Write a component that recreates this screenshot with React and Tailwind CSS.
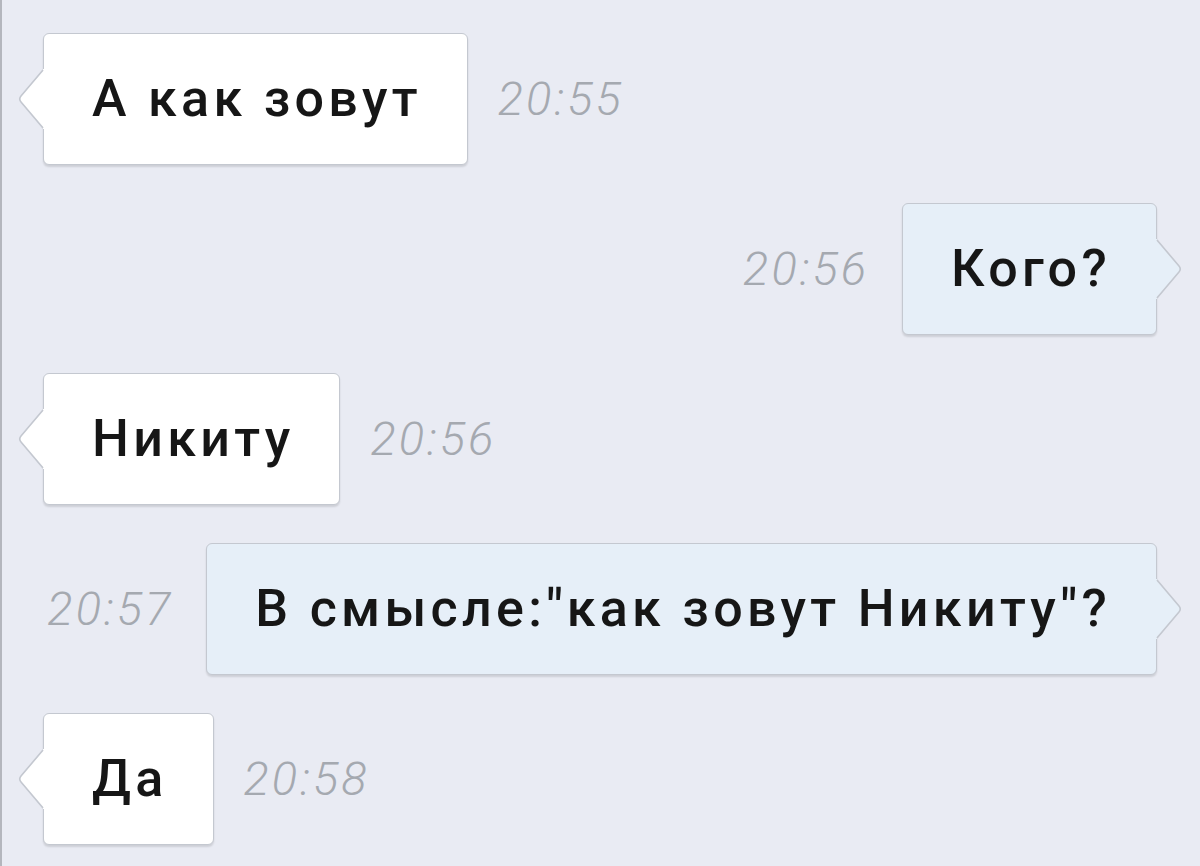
import React from 'react';

const messages = [
  { id: 1, out: false, text: 'А как зовут', time: '20:55' },
  { id: 2, out: true, text: 'Кого?', time: '20:56' },
  { id: 3, out: false, text: 'Никиту', time: '20:56' },
  { id: 4, out: true, text: 'В смысле:"как зовут Никиту"?', time: '20:57' },
  { id: 5, out: false, text: 'Да', time: '20:58' },
];

// little pointer on the side of a bubble
const Tail = ({ out }) => {
  const fill = out ? '#e6eff8' : '#ffffff';
  return (
    <svg
      width="30"
      height="60"
      viewBox="0 0 30 60"
      className={`absolute top-1/2 -translate-y-1/2 ${out ? '-right-[28px] scale-x-[-1]' : '-left-[28px]'}`}
    >
      <path d="M30 0 L27 0 L27 2 L5 27 Q2.5 30 5 33 L27 58 L27 60 L30 60 Z" fill={fill} />
      <path d="M27 1 L5 27 Q2.5 30 5 33 L27 59" fill="none" stroke="#c4c8d0" strokeWidth="1.6" />
    </svg>
  );
};

const Time = ({ t }) => (
  <span className="text-[47px] font-light italic text-[#a5a9b0] tracking-[3px]" style={{ fontFamily: 'Roboto, sans-serif' }}>
    {t}
  </span>
);

const Bubble = ({ msg }) => (
  <div
    className={`relative h-[132px] flex items-center pl-[48px] pr-[45px] rounded-[6px] border-[1.5px] border-[#c4c8d0] shadow-[0_2px_2px_rgba(0,0,0,0.12)] ${
      msg.out ? 'bg-[#e6eff8]' : 'bg-white'
    }`}
  >
    <Tail out={msg.out} />
    <span className="text-[52px] font-medium text-[#161616] leading-none whitespace-nowrap tracking-[4.3px]">{msg.text}</span>
  </div>
);

export default function App() {
  return (
    <div
      className="w-[1200px] h-[866px] bg-[#e9ebf3] border-l-[2px] border-[#b4b6bd] overflow-hidden"
      style={{ fontFamily: 'Roboto, "Noto Sans", sans-serif' }}
    >
      <div className="flex flex-col gap-[38px] pt-[33px] pl-[41px] pr-[43px]">
        {messages.map((msg) =>
          msg.out ? (
            <div key={msg.id} className="flex items-center justify-end gap-[33px]">
              <Time t={msg.time} />
              <Bubble msg={msg} />
            </div>
          ) : (
            <div key={msg.id} className="flex items-center gap-[30px]">
              <Bubble msg={msg} />
              <Time t={msg.time} />
            </div>
          )
        )}
      </div>
    </div>
  );
}
